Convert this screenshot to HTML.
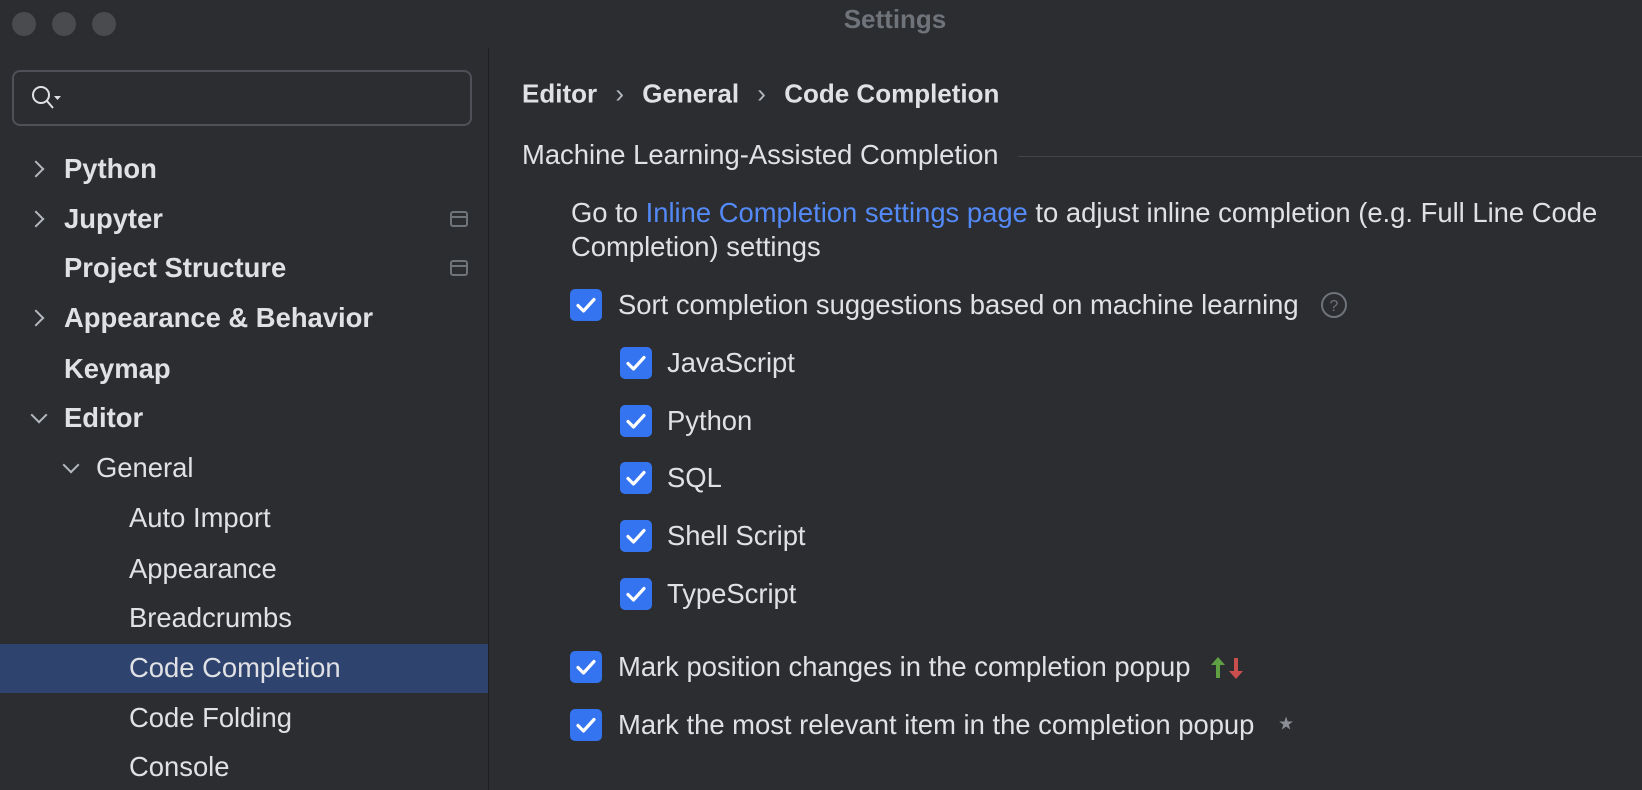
<html><head><style>
body{margin:0;width:1642px;height:790px;background:#2b2d30;font-family:"Liberation Sans",sans-serif;color:#dfe1e5;overflow:hidden;position:relative}
.a{position:absolute;white-space:nowrap}
.dot{position:absolute;top:12px;width:24px;height:24px;border-radius:50%;background:#4a4b4f}
.side{position:absolute;left:0;top:48px;width:488px;height:742px;border-right:1px solid #1e1f22}
.b{font-weight:bold;font-size:25.8px}
.chev{position:absolute;width:10px;height:10px;border-right:2px solid #b4b8bf;border-bottom:2px solid #b4b8bf}
.cb{position:absolute;width:32px;height:32px;border-radius:5px;background:#3574f0}
.cb svg{position:absolute;left:0;top:0}
.t{font-size:27.4px;position:absolute;white-space:nowrap;transform:translateY(-50%)}
.ic{position:absolute;width:14px;height:12px;border:2px solid #6f737a;border-radius:3px}
.ic:after{content:"";position:absolute;left:0;right:0;top:3px;border-top:2px solid #6f737a}
</style></head><body>
<div class="dot" style="left:12px"></div><div class="dot" style="left:52px"></div><div class="dot" style="left:92px"></div>
<div class="a b" style="left:0;width:1790px;text-align:center;top:4px;font-size:26px;color:#6f737a">Settings</div>
<div class="side"></div>
<div class="a" style="left:12px;top:70px;width:456px;height:52px;border:2px solid #4e5157;border-radius:8px"></div>
<svg class="a" style="left:30px;top:84px" width="36" height="28"><circle cx="11" cy="11" r="8" fill="none" stroke="#dfe1e5" stroke-width="2"/><line x1="17" y1="17" x2="23" y2="24" stroke="#dfe1e5" stroke-width="2"/><path d="M24 12h7l-3.5 4z" fill="#dfe1e5"/></svg>
<div class="a" style="left:0;top:644px;width:488px;height:49px;background:#2e436e"></div>
<div class="chev" style="left:30px;top:163px;transform:rotate(-45deg)"></div>
<div class="chev" style="left:30px;top:213px;transform:rotate(-45deg)"></div>
<div class="chev" style="left:30px;top:312px;transform:rotate(-45deg)"></div>
<div class="chev" style="left:33px;top:409px;transform:rotate(45deg)"></div>
<div class="chev" style="left:65px;top:459px;transform:rotate(45deg)"></div>
<div class="t b" style="left:64px;top:169px">Python</div>
<div class="t b" style="left:64px;top:219px">Jupyter</div>
<div class="t b" style="left:64px;top:268px">Project Structure</div>
<div class="t b" style="left:64px;top:318px">Appearance &amp; Behavior</div>
<div class="t b" style="left:64px;top:369px">Keymap</div>
<div class="t b" style="left:64px;top:418px">Editor</div>
<div class="t" style="left:96px;top:468px">General</div>
<div class="t" style="left:129px;top:518px">Auto Import</div>
<div class="t" style="left:129px;top:569px">Appearance</div>
<div class="t" style="left:129px;top:618px">Breadcrumbs</div>
<div class="t" style="left:129px;top:668px">Code Completion</div>
<div class="t" style="left:129px;top:718px">Code Folding</div>
<div class="t" style="left:129px;top:767px">Console</div>
<div class="ic" style="left:450px;top:211px"></div>
<div class="ic" style="left:450px;top:260px"></div>
<div class="t b" style="left:522px;top:94px;font-size:26px">Editor <span style="font-weight:normal;color:#b4b8bf;margin:0 11px">›</span> General <span style="font-weight:normal;color:#b4b8bf;margin:0 11px">›</span> Code Completion</div>
<div class="t" style="left:522px;top:155px">Machine Learning-Assisted Completion</div>
<div class="a" style="left:1018px;right:0;top:156px;border-top:1px solid #43454a"></div>
<div class="t" style="left:571px;top:213px">Go to <span style="color:#548af7">Inline Completion settings page</span> to adjust inline completion (e.g. Full Line Code</div>
<div class="t" style="left:571px;top:247px">Completion) settings</div>
<svg width="0" height="0" style="position:absolute"><defs><path id="ck" d="M8 16.5l5.5 5.5L24 10.5" fill="none" stroke="#fff" stroke-width="3.2" stroke-linecap="round" stroke-linejoin="round"/></defs></svg>
<div class="cb" style="left:570px;top:289px"><svg width="32" height="32"><use href="#ck"/></svg></div>
<div class="t" style="left:618px;top:305px">Sort completion suggestions based on machine learning</div>
<svg class="a" style="left:1320px;top:291px" width="28" height="28"><circle cx="14" cy="14" r="12" fill="none" stroke="#6f737a" stroke-width="2"/><text x="14" y="20" font-size="16" text-anchor="middle" fill="#6f737a" font-family="Liberation Sans">?</text></svg>
<div class="cb" style="left:620px;top:347px"><svg width="32" height="32"><use href="#ck"/></svg></div>
<div class="t" style="left:667px;top:363px">JavaScript</div>
<div class="cb" style="left:620px;top:405px"><svg width="32" height="32"><use href="#ck"/></svg></div>
<div class="t" style="left:667px;top:421px">Python</div>
<div class="cb" style="left:620px;top:462px"><svg width="32" height="32"><use href="#ck"/></svg></div>
<div class="t" style="left:667px;top:478px">SQL</div>
<div class="cb" style="left:620px;top:520px"><svg width="32" height="32"><use href="#ck"/></svg></div>
<div class="t" style="left:667px;top:536px">Shell Script</div>
<div class="cb" style="left:620px;top:578px"><svg width="32" height="32"><use href="#ck"/></svg></div>
<div class="t" style="left:667px;top:594px">TypeScript</div>
<div class="cb" style="left:570px;top:651px"><svg width="32" height="32"><use href="#ck"/></svg></div>
<div class="t" style="left:618px;top:667px">Mark position changes in the completion popup</div>
<svg class="a" style="left:1210px;top:656px" width="36" height="24"><path d="M8 1l-7 8h5v13h4V9h5z" fill="#5fa043"/><path d="M26 23l7-8h-5V2h-4v13h-5z" fill="#c94f4f"/></svg>
<div class="cb" style="left:570px;top:709px"><svg width="32" height="32"><use href="#ck"/></svg></div>
<div class="t" style="left:618px;top:725px">Mark the most relevant item in the completion popup</div>
<div class="t" style="left:1278px;top:724px;font-size:18px;color:#8c8f95">★</div>
</body></html>
